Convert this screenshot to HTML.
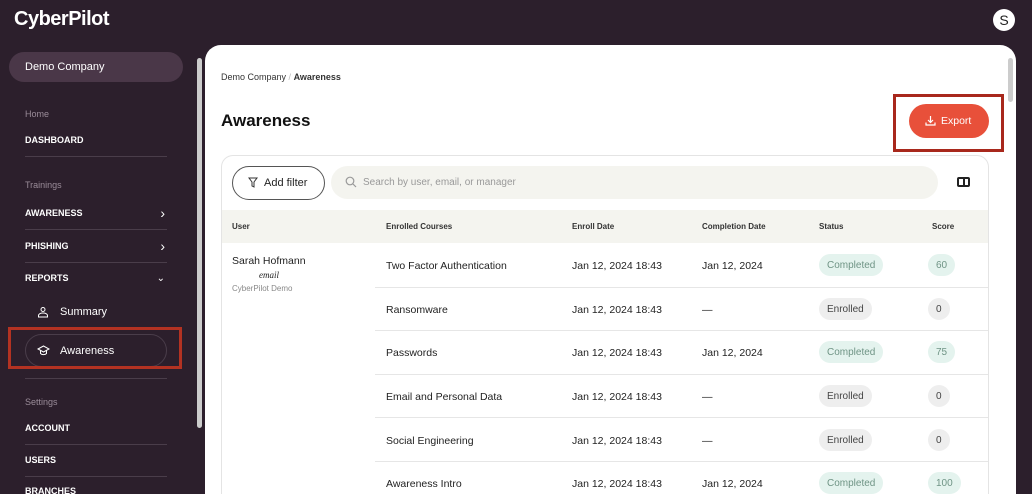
<!DOCTYPE html>
<html><head><style>
*{margin:0;padding:0;box-sizing:border-box}
html,body{width:1032px;height:494px;overflow:hidden}
body{background:#2c1f2c;font-family:"Liberation Sans",sans-serif;position:relative}
.abs{position:absolute}
.logo{left:14px;top:8px;color:#fff;font-weight:bold;font-size:20px;letter-spacing:-0.5px}
.av{left:993px;top:9px;width:22px;height:22px;border-radius:50%;background:#fff;color:#222;font-size:14px;text-align:center;line-height:22px}
.pill{left:9px;top:52px;width:174px;height:30px;border-radius:15px;background:#4a3748;color:#fff;font-size:11px;display:flex;align-items:center;padding-left:16px}
.sec{left:25px;color:#9a8c99;font-size:9px}
.item{left:25px;width:142px;color:#fff;font-size:9px;font-weight:bold;border-bottom:1px solid #4a3d4a;height:33px;line-height:33px}
.chev{position:absolute;right:2px;top:0;font-weight:normal;font-size:14px}
.sub{color:#fff;font-size:11px}
.sb{left:197px;top:58px;width:5px;height:370px;background:#ccc;border-radius:3px}
.main{left:205px;top:45px;width:811px;height:449px;background:#fff;border-radius:16px 16px 0 0}
.card{left:221px;top:155px;width:768px;height:339px;border:1px solid #e4e4e4;border-bottom:none;border-radius:12px 12px 0 0}
.th{top:210px;left:222px;width:766px;height:33px;background:#f4f4ef}
.h{font-size:8px;font-weight:bold;color:#333;top:222px}
.c{font-size:10.5px;color:#222}
.line{left:375px;width:613px;height:1px;background:#e6e6e6}
.badge{font-size:10px;height:22px;display:flex;align-items:center;border-radius:11px;padding:0 8px}
.g{background:#e4f3ee;color:#6f9485}
.e{background:#eeeeee;color:#444}
</style></head><body>
<div class="abs logo">CyberPilot</div>
<div class="abs av">S</div>
<div class="abs pill">Demo Company</div>
<div class="abs sec" style="top:109px">Home</div>
<div class="abs item" style="top:124px">DASHBOARD</div>
<div class="abs sec" style="top:180px">Trainings</div>
<div class="abs item" style="top:197px">AWARENESS<span class="chev">›</span></div>
<div class="abs item" style="top:230px">PHISHING<span class="chev">›</span></div>
<div class="abs item" style="top:262px;border:none">REPORTS<span class="chev" style="font-size:10px">⌄</span></div>
<svg class="abs" style="left:37px;top:306px" width="12" height="12" viewBox="0 0 12 12" fill="none" stroke="#fff" stroke-width="1"><circle cx="6" cy="3.5" r="2"/><path d="M1.5 11v-1.5c0-1.5 2-2.5 4.5-2.5s4.5 1 4.5 2.5V11z"/></svg>
<div class="abs sub" style="left:60px;top:306px">Summary</div>
<div class="abs" style="left:25px;top:334px;width:142px;height:33px;border:1px solid #4a3d4a;border-radius:17px"></div>
<svg class="abs" style="left:37px;top:345px" width="13" height="11" viewBox="0 0 13 11" fill="none" stroke="#fff" stroke-width="1"><path d="M1 4l5.5-3 5.5 3-5.5 3z M3.5 5.5v3c1.5 1.5 4.5 1.5 6 0v-3"/></svg>
<div class="abs sub" style="left:60px;top:345px">Awareness</div>
<div class="abs" style="left:8px;top:327px;width:174px;height:42px;border:3px solid #b33222"></div>
<div class="abs" style="left:25px;top:378px;width:142px;height:1px;background:#4a3d4a"></div>
<div class="abs sec" style="top:397px">Settings</div>
<div class="abs item" style="top:412px">ACCOUNT</div>
<div class="abs item" style="top:444px">USERS</div>
<div class="abs item" style="top:475px;border:none;height:19px;overflow:hidden;line-height:33px">BRANCHES</div>
<div class="abs sb"></div>
<div class="abs main"></div>
<div class="abs" style="left:1008px;top:58px;width:5px;height:44px;background:#ccc;border-radius:3px"></div>
<div class="abs" style="left:221px;top:72px;font-size:9px;color:#333">Demo Company <span style="color:#bbb">/</span> <b>Awareness</b></div>
<div class="abs" style="left:221px;top:111px;font-size:17px;font-weight:bold;color:#111">Awareness</div>
<div class="abs" style="left:893px;top:94px;width:111px;height:58px;border:3px solid #a8281c"></div>
<div class="abs" style="left:909px;top:104px;width:80px;height:34px;border-radius:17px;background:#e8503a;color:#fff;font-size:10.5px;line-height:34px;padding-left:32px">Export</div>
<svg class="abs" style="left:925px;top:115px" width="11" height="11" viewBox="0 0 11 11" fill="none" stroke="#fff" stroke-width="1.2"><path d="M5.5 1v6M3 5l2.5 2.5L8 5M1 7.5v2.5h9V7.5"/></svg>
<div class="abs card"></div>
<div class="abs" style="left:232px;top:166px;width:93px;height:34px;border:1px solid #555;border-radius:17px;font-size:11px;line-height:32px;color:#222;padding-left:31px">Add filter</div>
<svg class="abs" style="left:248px;top:177px" width="10" height="11" viewBox="0 0 10 11" fill="none" stroke="#333" stroke-width="1"><path d="M1 1h8L6 5v5L4 9V5z"/></svg>
<div class="abs" style="left:331px;top:166px;width:607px;height:33px;border-radius:17px;background:#f4f4ef;font-size:10px;line-height:33px;padding-left:32px;color:#999">Search by user, email, or manager</div>
<svg class="abs" style="left:345px;top:176px" width="12" height="12" viewBox="0 0 12 12" fill="none" stroke="#999" stroke-width="1.2"><circle cx="5" cy="5" r="3.8"/><path d="M8 8l3 3"/></svg>
<div class="abs" style="left:957px;top:177px;width:13px;height:10px;border:2px solid #222;border-radius:2px"><div style="margin-left:3.5px;width:2px;height:6px;background:#222"></div></div>
<div class="abs th"></div>
<div class="abs h" style="left:232px">User</div>
<div class="abs h" style="left:386px">Enrolled Courses</div>
<div class="abs h" style="left:572px">Enroll Date</div>
<div class="abs h" style="left:702px">Completion Date</div>
<div class="abs h" style="left:819px">Status</div>
<div class="abs h" style="left:932px">Score</div>
<div class="abs c" style="left:232px;top:255px">Sarah Hofmann</div>
<div class="abs" style="left:259px;top:270px;font-size:9px;font-style:italic;font-family:'Liberation Serif',serif;color:#222">email</div>
<div class="abs" style="left:232px;top:284px;font-size:8px;color:#888">CyberPilot Demo</div>

<div class="abs c" style="left:386px;top:260px">Two Factor Authentication</div><div class="abs c" style="left:572px;top:260px">Jan 12, 2024 18:43</div><div class="abs c" style="left:702px;top:260px">Jan 12, 2024</div><div class="abs badge g" style="left:819px;top:254px">Completed</div><div class="abs badge g" style="left:928px;top:254px">60</div>
<div class="abs line" style="top:287px"></div>
<div class="abs c" style="left:386px;top:304px">Ransomware</div><div class="abs c" style="left:572px;top:304px">Jan 12, 2024 18:43</div><div class="abs c" style="left:702px;top:304px">—</div><div class="abs badge e" style="left:819px;top:298px">Enrolled</div><div class="abs badge e" style="left:928px;top:298px">0</div>
<div class="abs line" style="top:330px"></div>
<div class="abs c" style="left:386px;top:347px">Passwords</div><div class="abs c" style="left:572px;top:347px">Jan 12, 2024 18:43</div><div class="abs c" style="left:702px;top:347px">Jan 12, 2024</div><div class="abs badge g" style="left:819px;top:341px">Completed</div><div class="abs badge g" style="left:928px;top:341px">75</div>
<div class="abs line" style="top:374px"></div>
<div class="abs c" style="left:386px;top:391px">Email and Personal Data</div><div class="abs c" style="left:572px;top:391px">Jan 12, 2024 18:43</div><div class="abs c" style="left:702px;top:391px">—</div><div class="abs badge e" style="left:819px;top:385px">Enrolled</div><div class="abs badge e" style="left:928px;top:385px">0</div>
<div class="abs line" style="top:417px"></div>
<div class="abs c" style="left:386px;top:435px">Social Engineering</div><div class="abs c" style="left:572px;top:435px">Jan 12, 2024 18:43</div><div class="abs c" style="left:702px;top:435px">—</div><div class="abs badge e" style="left:819px;top:429px">Enrolled</div><div class="abs badge e" style="left:928px;top:429px">0</div>
<div class="abs line" style="top:461px"></div>
<div class="abs c" style="left:386px;top:478px">Awareness Intro</div><div class="abs c" style="left:572px;top:478px">Jan 12, 2024 18:43</div><div class="abs c" style="left:702px;top:478px">Jan 12, 2024</div><div class="abs badge g" style="left:819px;top:472px;height:22px">Completed</div><div class="abs badge g" style="left:928px;top:472px">100</div>
</body></html>
